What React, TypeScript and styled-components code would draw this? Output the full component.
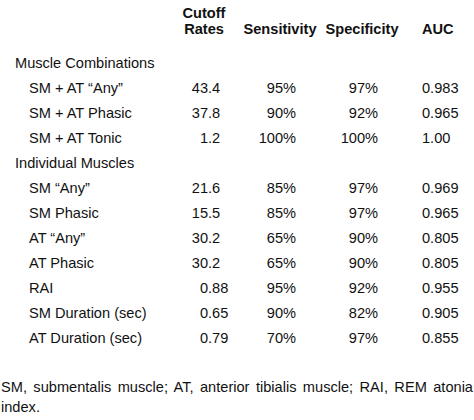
import React from 'react';
import styled, { createGlobalStyle } from 'styled-components';

const GlobalStyle = createGlobalStyle`
  html, body {
    margin: 0;
    padding: 0;
    background: #ffffff;
  }
  body {
    font-family: 'Liberation Sans', Arial, sans-serif;
    color: #111111;
  }
`;

const Page = styled.div`
  width: 474px;
  height: 420px;
  overflow: hidden;
  padding-top: 5px;
  box-sizing: border-box;
  font-size: 14.6px;
`;

const Grid = styled.div`
  display: grid;
  grid-template-columns: 172px 64px 88px 76px 74px;
`;

const HeadCell = styled.div<{ $align?: 'center' | 'left' }>`
  font-weight: 700;
  line-height: 16px;
  height: 45.5px;
  text-align: ${p => (p.$align === 'left' ? 'left' : 'center')};
  padding-left: ${p => (p.$align === 'left' ? '22px' : '0')};
  display: flex;
  flex-direction: column;
  justify-content: flex-end;
  padding-bottom: 13.5px;
  box-sizing: border-box;
`;

const HeadStack = styled.div`
  display: flex;
  flex-direction: column;
  align-items: center;
  justify-content: flex-start;
  font-weight: 700;
  line-height: 16px;
  height: 45.5px;
`;

const GroupLabel = styled.div`
  grid-column: 1 / -1;
  height: 25px;
  line-height: 25px;
  padding-left: 15px;
`;

const RowLabel = styled.div`
  height: 25px;
  line-height: 25px;
  padding-left: 29px;
  white-space: nowrap;
`;

const Cell = styled.div<{ $pad: number; $align: 'left' | 'right' }>`
  height: 25px;
  line-height: 25px;
  text-align: ${p => p.$align};
  padding-${p => p.$align}: ${p => p.$pad}px;
`;

const Decimal = styled.div`
  height: 25px;
  line-height: 25px;
  display: flex;
`;

const IntPart = styled.span`
  width: 36px;
  text-align: right;
`;

const Footnote = styled.p`
  margin: 26.5px 0 0;
  padding-left: 1px;
  width: 472px;
  line-height: 20px;
  text-align: justify;
`;

type Row = [string, string, string, string, string];

const groups: { title: string; rows: Row[] }[] = [
  {
    title: 'Muscle Combinations',
    rows: [
      ['SM + AT \u201cAny\u201d', '43.4', '95%', '97%', '0.983'],
      ['SM + AT Phasic', '37.8', '90%', '92%', '0.965'],
      ['SM + AT Tonic', '1.2', '100%', '100%', '1.00'],
    ],
  },
  {
    title: 'Individual Muscles',
    rows: [
      ['SM \u201cAny\u201d', '21.6', '85%', '97%', '0.969'],
      ['SM Phasic', '15.5', '85%', '97%', '0.965'],
      ['AT \u201cAny\u201d', '30.2', '65%', '90%', '0.805'],
      ['AT Phasic', '30.2', '65%', '90%', '0.805'],
      ['RAI', '0.88', '95%', '92%', '0.955'],
      ['SM Duration (sec)', '0.65', '90%', '82%', '0.905'],
      ['AT Duration (sec)', '0.79', '70%', '97%', '0.855'],
    ],
  },
];

const splitDecimal = (v: string) => {
  const i = v.indexOf('.');
  return [v.slice(0, i), v.slice(i)];
};

export default function App() {
  return (
    <>
      <GlobalStyle />
      <Page>
        <Grid>
          <div />
          <HeadStack>
            <span>Cutoff</span>
            <span>Rates</span>
          </HeadStack>
          <HeadCell>Sensitivity</HeadCell>
          <HeadCell>Specificity</HeadCell>
          <HeadCell $align="left">AUC</HeadCell>

          {groups.map(g => (
            <React.Fragment key={g.title}>
              <GroupLabel>{g.title}</GroupLabel>
              {g.rows.map(r => {
                const [whole, frac] = splitDecimal(r[1]);
                return (
                  <React.Fragment key={r[0]}>
                    <RowLabel>{r[0]}</RowLabel>
                    <Decimal>
                      <IntPart>{whole}</IntPart>
                      <span>{frac}</span>
                    </Decimal>
                    <Cell $align="right" $pad={28}>{r[2]}</Cell>
                    <Cell $align="right" $pad={22}>{r[3]}</Cell>
                    <Cell $align="left" $pad={22}>{r[4]}</Cell>
                  </React.Fragment>
                );
              })}
            </React.Fragment>
          ))}
        </Grid>
        <Footnote>
          SM, submentalis muscle; AT, anterior tibialis muscle; RAI, REM atonia index.
        </Footnote>
      </Page>
    </>
  );
}
